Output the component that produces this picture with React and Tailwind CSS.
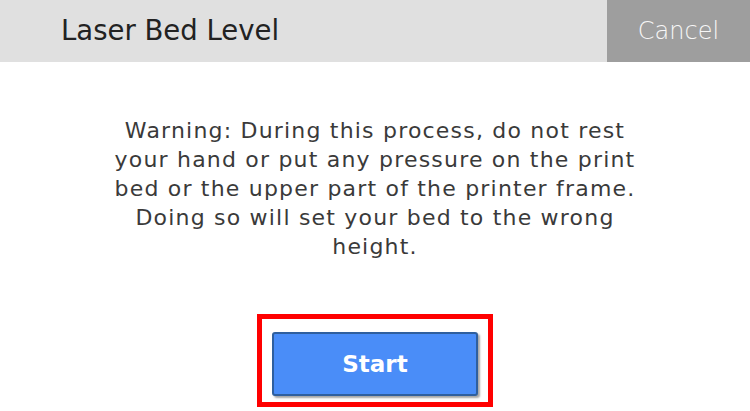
export default function App() {
  return (
    <div className="w-[750px] h-[411px] bg-white overflow-hidden flex flex-col" style={{ fontFamily: '"DejaVu Sans", sans-serif' }}>
      <div className="h-[62px] flex bg-[#e0e0e0]">
        <div className="flex-1 flex items-center pl-[61px] text-[27.5px] text-[#222]">Laser Bed Level</div>
        <div className="w-[143px] bg-[#9e9e9e] flex items-center justify-center text-[24px] text-[#f7f7f7] font-light">Cancel</div>
      </div>
      <div className="flex flex-col items-center">
        <p className="mt-[54px] w-[560px] text-center text-[22px] leading-[29px] tracking-[1.2px] text-[#3a3a3a]">
          Warning: During this process, do not rest your hand or put any pressure on the print bed or the upper part of the printer frame. Doing so will set your bed to the wrong height.
        </p>
        <div className="mt-[53px] border-[5px] border-[#ff0000] pt-[13px] pb-[6px] px-[10px]">
          <button className="w-[206px] h-[64px] bg-[#4a8df8] border-2 border-[#2f5f9e] rounded-[3px] shadow-[2px_2px_2px_rgba(0,0,0,0.35)] text-white font-bold text-[23px] flex items-center justify-center">
            Start
          </button>
        </div>
      </div>
    </div>
  );
}
